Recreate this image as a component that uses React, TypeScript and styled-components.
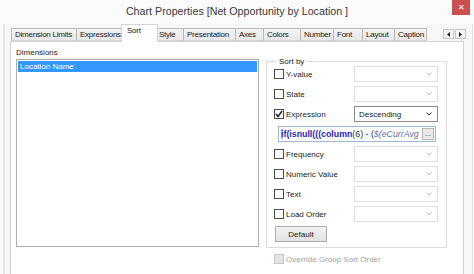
import React from "react";
import styled, { createGlobalStyle } from "styled-components";

const Global = createGlobalStyle`
  html, body { margin: 0; padding: 0; }
  body {
    width: 474px; height: 274px; overflow: hidden; background: #fbfbfb;
    font-family: "Liberation Sans", Arial, sans-serif;
  }
`;

const Window = styled.div`
  width: 474px; height: 274px; display: flex; flex-direction: column;
  background: #fbfbfb; overflow: hidden;
`;

const TitleBar = styled.div`
  height: 24px; flex: none; display: grid;
  grid-template-columns: 1fr auto 1fr; align-items: start;
`;

const Title = styled.div`
  grid-column: 2; padding-top: 3px;
  font-size: 10.7px; color: #3a3a3a; line-height: 16px; white-space: nowrap;
`;

const Close = styled.div`
  justify-self: end; width: 18px; height: 15px; margin-right: 4px;
  background: #c9504f; color: #fff; font-size: 8px; line-height: 15px;
  text-align: center;
`;

const Client = styled.div`
  flex: 1; min-height: 0; display: flex; flex-direction: column;
  margin-left: 3px; border-left: 2px solid #e6e6e6;
  padding-left: 5px; padding-right: 8px; margin-right: 1px;
  border-right: 1px solid #e2e2e2; background: #f7f7f7;
`;

const TabStrip = styled.div`
  height: 17px; flex: none; display: flex; align-items: flex-end;
  padding-left: 1px; position: relative; z-index: 1;
`;

const Tab = styled.div<{ $w: number; $active?: boolean }>`
  box-sizing: border-box; width: ${(p) => p.$w}px; overflow: hidden;
  height: ${(p) => (p.$active ? 18 : 13)}px;
  margin-right: ${(p) => (p.$active ? -2 : 0)}px;
  margin-bottom: ${(p) => (p.$active ? -1 : 0)}px;
  margin-left: ${(p) => (p.$active ? -2 : -1)}px;
  padding-left: ${(p) => (p.$active ? 5 : 3)}px;
  border: 1px solid ${(p) => (p.$active ? "#d4d4d4" : "#b9b9b9")};
  border-bottom: ${(p) => (p.$active ? "none" : "1px solid #d4d4d4")};
  background: ${(p) => (p.$active ? "#ffffff" : "linear-gradient(#f4f4f4, #e8e8e8)")};
  font-size: 8px; letter-spacing: -0.25px; color: #222;
  line-height: ${(p) => (p.$active ? 12 : 11)}px;
  white-space: nowrap; position: relative; z-index: ${(p) => (p.$active ? 2 : 0)};
  &:first-child { margin-left: 0; }
`;

const ScrollButtons = styled.div`
  margin-left: auto; margin-right: -2px; margin-bottom: 2px; display: flex; gap: 1px;
`;

const ArrowBtn = styled.div`
  width: 11px; height: 10px; box-sizing: border-box; border: 1px solid #c6c6c6;
  background: #f4f4f4; display: flex; align-items: center; justify-content: center;
`;

const Panel = styled.div`
  flex: 1; background: #fff; border: 1px solid #d2d2d2; border-bottom: none;
  display: grid; grid-template-columns: 243px 181px; column-gap: 7px;
  padding: 5px 0 0 5px; align-content: start;
`;

const LeftCol = styled.div`
  display: flex; flex-direction: column;
`;

const Label = styled.div`
  font-size: 8px; line-height: 11px; color: #222; white-space: nowrap;
`;

const ListBox = styled.div`
  margin-top: 1px; height: 188px; box-sizing: border-box;
  border: 1px solid #adadad; padding: 1px;
`;

const ListItem = styled.div<{ $selected?: boolean }>`
  height: 11px; line-height: 11px; padding-left: 2px; font-size: 8px;
  background: ${(p) => (p.$selected ? "#3399ff" : "transparent")};
  color: ${(p) => (p.$selected ? "#fff" : "#222")};
`;

const RightCol = styled.div`
  display: flex; flex-direction: column; padding-top: 10px;
`;

const Group = styled.fieldset`
  margin: 0; padding: 0 9px 5px 7px; border: 1px solid #dcdcdc;
  display: flex; flex-direction: column; gap: 4px; min-width: 0;
`;

const Legend = styled.legend`
  padding: 0 2px; margin-left: 3px; font-size: 8px; line-height: 9px; color: #222;
`;

const Row = styled.div`
  height: 16px; display: grid; grid-template-columns: 80px 84px; align-items: center;
`;

const CheckLabel = styled.label<{ $disabled?: boolean }>`
  display: flex; align-items: center; gap: 2px; font-size: 8px;
  color: ${(p) => (p.$disabled ? "#a3a3a3" : "#222")}; white-space: nowrap;
`;

const Box = styled.span<{ $disabled?: boolean }>`
  width: 10px; height: 10px; box-sizing: border-box; flex: none;
  border: 1px solid ${(p) => (p.$disabled ? "#c8c8c8" : "#4a4a4a")};
  background: ${(p) => (p.$disabled ? "#e4e4e4" : "#fff")};
  display: flex; align-items: center; justify-content: center;
`;

const Combo = styled.div<{ $active?: boolean }>`
  height: 16px; box-sizing: border-box;
  border: 1px solid ${(p) => (p.$active ? "#8c8c8c" : "#e0e0e0")};
  background: #fff; display: flex; align-items: center;
  padding: 0 5px 0 4px; font-size: 8px; color: #222;
`;

const ComboText = styled.span`
  flex: 1;
`;

const ExprField = styled.div`
  height: 16px; box-sizing: border-box; margin-left: 4px; margin-right: 1px;
  border: 1px solid #9fb8d6; background: #fff; display: flex; align-items: center;
  padding-left: 2px; font-size: 8.8px; white-space: nowrap; overflow: hidden; position: relative;
`;

const Tok = styled.span<{ $kind: "fn" | "plain" | "var" | "sel" }>`
  color: ${(p) => (p.$kind === "fn" || p.$kind === "sel" ? "#2a2aa8" : p.$kind === "var" ? "#6f6f9a" : "#333")};
  font-weight: ${(p) => (p.$kind === "fn" || p.$kind === "sel" ? 700 : 400)};
  font-style: ${(p) => (p.$kind === "var" ? "italic" : "normal")};
  background: ${(p) => (p.$kind === "sel" ? "#8ec2f5" : "transparent")};
`;

const Ellipsis = styled.div`
  position: absolute; right: 1px; top: 1px; bottom: 1px; width: 12px;
  background: #e9e9e9; border: 1px solid #b5b5b5; box-sizing: border-box;
  font-size: 7px; color: #333; line-height: 10px; text-align: center;
`;

const Button = styled.div`
  width: 52px; height: 16px; box-sizing: border-box; margin-left: 1px;
  border: 1px solid #adadad; background: linear-gradient(#f2f2f2, #e3e3e3);
  font-size: 8px; color: #222; display: flex; align-items: center; justify-content: center;
`;

const Override = styled.div`
  margin-top: 4px; padding-left: 8px; height: 14px; display: flex; align-items: center;
`;

const Chevron = ({ dark }: { dark?: boolean }) => (
  <svg width="6" height="4" viewBox="0 0 6 4" style={{ flex: "none" }}>
    <polyline points="0.5,0.5 3,3 5.5,0.5" fill="none" stroke={dark ? "#333" : "#c4c4c4"} strokeWidth="1" />
  </svg>
);

const Check = ({ checked, disabled }: { checked?: boolean; disabled?: boolean }) => (
  <Box $disabled={disabled}>
    {checked && (
      <svg width="8" height="8" viewBox="0 0 8 8">
        <polyline points="1,4 3,6.5 7,1" fill="none" stroke="#222" strokeWidth="1.5" />
      </svg>
    )}
  </Box>
);

const tabs: [string, number][] = [
  ["Dimension Limits", 66],
  ["Expressions", 47],
  ["Sort", 37],
  ["Style", 29],
  ["Presentation", 53],
  ["Axes", 29],
  ["Colors", 38],
  ["Number", 34],
  ["Font", 30],
  ["Layout", 33],
  ["Caption", 33],
];

const sortRows = ["Y-value", "State", "Expression", "Frequency", "Numeric Value", "Text", "Load Order"];

export default function App() {
  return (
    <Window>
      <Global />
      <TitleBar>
        <Title>Chart Properties [Net Opportunity by Location ]</Title>
        <Close>✕</Close>
      </TitleBar>
      <Client>
        <TabStrip>
          {tabs.map(([t, w]) => (
            <Tab key={t} $w={w} $active={t === "Sort"}>
              {t}
            </Tab>
          ))}
          <ScrollButtons>
            <ArrowBtn>
              <svg width="3" height="5" viewBox="0 0 3 5"><polygon points="3,0 0,2.5 3,5" fill="#222" /></svg>
            </ArrowBtn>
            <ArrowBtn>
              <svg width="3" height="5" viewBox="0 0 3 5"><polygon points="0,0 3,2.5 0,5" fill="#222" /></svg>
            </ArrowBtn>
          </ScrollButtons>
        </TabStrip>
        <Panel>
          <LeftCol>
            <Label>Dimensions</Label>
            <ListBox>
              <ListItem $selected>Location Name</ListItem>
            </ListBox>
          </LeftCol>
          <RightCol>
            <Group>
              <Legend>Sort by</Legend>
              {sortRows.map((r) => (
                <React.Fragment key={r}>
                  <Row>
                    <CheckLabel>
                      <Check checked={r === "Expression"} />
                      {r}
                    </CheckLabel>
                    <Combo $active={r === "Expression"}>
                      <ComboText>{r === "Expression" ? "Descending" : ""}</ComboText>
                      <Chevron dark={r === "Expression"} />
                    </Combo>
                  </Row>
                  {r === "Expression" && (
                    <ExprField>
                      <Tok $kind="sel">i</Tok>
                      <Tok $kind="fn">f(isnull(((column</Tok>
                      <Tok $kind="plain">(6) - (</Tok>
                      <Tok $kind="var">$(eCurrAvg</Tok>
                      <Ellipsis>...</Ellipsis>
                    </ExprField>
                  )}
                </React.Fragment>
              ))}
              <Button>Default</Button>
            </Group>
            <Override>
              <CheckLabel $disabled>
                <Check disabled />
                Override Group Sort Order
              </CheckLabel>
            </Override>
          </RightCol>
        </Panel>
      </Client>
    </Window>
  );
}
